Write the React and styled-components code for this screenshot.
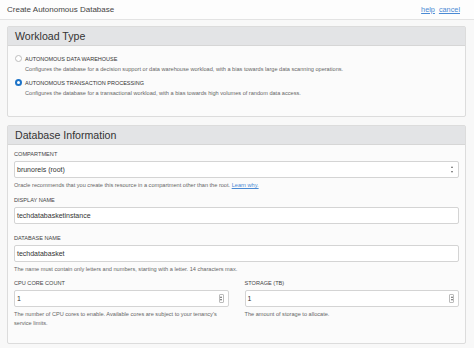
import React from "react"
import styled, { createGlobalStyle } from "styled-components"

const GlobalStyle = createGlobalStyle`
  body {
    margin: 0;
    background: #f8f8f8;
    font-family: "Liberation Sans", Arial, sans-serif;
    color: #333;
  }
`

const Page = styled.div`
  width: 474px;
  height: 348px;
  overflow: hidden;
`

const TopBar = styled.header`
  height: 20px;
  background: #fdfdfd;
  border-bottom: 1px solid #e3e3e3;
  display: flex;
  align-items: center;
  justify-content: space-between;
  padding: 0 14px 0 7px;
  box-sizing: border-box;
`

const Title = styled.h1`
  margin: 0;
  font-size: 8px;
  font-weight: 400;
  color: #444;
`

const Links = styled.div`
  display: flex;
  gap: 4px;
`

const TopLink = styled.a`
  font-size: 7.3px;
  color: #4a8ad4;
  text-decoration: underline;
`

const Body = styled.main`
  padding: 6px 8px 0 7px;
  display: flex;
  flex-direction: column;
  gap: 8px;
`

const Panel = styled.section`
  border: 1px solid #dcdcdc;
  border-radius: 2px;
  background: #fbfbfb;
  height: ${(p) => p.$height}px;
  box-sizing: border-box;
`

const PanelHeader = styled.h2`
  margin: 0;
  height: 18px;
  background: #e3e4e6;
  border-bottom: 1px solid #d6d6d6;
  font-size: 10.6px;
  font-weight: 400;
  color: #333;
  display: flex;
  align-items: center;
  padding-left: 7px;
`

const PanelBody = styled.div`
  padding: ${(p) => p.$pad};
`

const RadioRow = styled.label`
  display: grid;
  grid-template-columns: 7px 1fr;
  column-gap: 3px;
  align-items: center;
  margin-bottom: ${(p) => p.$gap}px;
`

const RadioDot = styled.span`
  width: 7px;
  height: 7px;
  box-sizing: border-box;
  border-radius: 50%;
  border: ${(p) => (p.$on ? "2px solid #1e74c8" : "1px solid #bdbdbd")};
  background: #fff;
`

const RadioLabel = styled.span`
  font-size: 5.5px;
  color: #333;
`

const RadioDesc = styled.span`
  grid-column: 2;
  font-size: 5.6px;
  color: #666;
  margin-top: 4px;
`

const Row = styled.div`
  display: grid;
  grid-template-columns: 1fr 1fr;
  column-gap: 16px;
`

const Field = styled.div`
  margin-bottom: ${(p) => p.$gap}px;
`

const FieldLabel = styled.div`
  font-size: 5.6px;
  color: #444;
  margin-bottom: 4px;
`

const InputBox = styled.div`
  height: 17px;
  box-sizing: border-box;
  border: 1px solid #d4d4d4;
  border-radius: 2px;
  background: #fff;
  display: flex;
  align-items: center;
  justify-content: space-between;
  padding: 0 4px 0 2px;
  font-size: 7px;
  color: #333;
`

const Help = styled.div`
  font-size: 5.6px;
  color: #666;
  margin-top: 3px;
  line-height: 9px;
`

const HelpLink = styled.a`
  color: #4a8ad4;
  text-decoration: underline;
`

const Spinner = styled.span`
  width: 5px;
  height: 9px;
  box-sizing: border-box;
  border: ${(p) => (p.$boxed ? "1px solid #bbb" : "none")};
  border-radius: 1px;
  display: flex;
  flex-direction: column;
  justify-content: space-around;
  align-items: center;
`

const Arrow = styled.span`
  width: 0;
  height: 0;
  border-left: 1.5px solid transparent;
  border-right: 1.5px solid transparent;
  ${(p) => (p.$up ? "border-bottom: 2px solid #666;" : "border-top: 2px solid #666;")}
`

const Stepper = ({ boxed }) => (
  <Spinner $boxed={boxed}>
    <Arrow $up />
    <Arrow />
  </Spinner>
)

export default function App() {
  return (
    <Page>
      <GlobalStyle />
      <TopBar>
        <Title>Create Autonomous Database</Title>
        <Links>
          <TopLink>help</TopLink>
          <TopLink>cancel</TopLink>
        </Links>
      </TopBar>
      <Body>
        <Panel $height={91}>
          <PanelHeader>Workload Type</PanelHeader>
          <PanelBody $pad="9px 7px 0 7px">
            <RadioRow $gap={7}>
              <RadioDot />
              <RadioLabel>AUTONOMOUS DATA WAREHOUSE</RadioLabel>
              <RadioDesc>
                Configures the database for a decision support or data warehouse workload, with a bias towards large data scanning operations.
              </RadioDesc>
            </RadioRow>
            <RadioRow $gap={0}>
              <RadioDot $on />
              <RadioLabel>AUTONOMOUS TRANSACTION PROCESSING</RadioLabel>
              <RadioDesc>
                Configures the database for a transactional workload, with a bias towards high volumes of random data access.
              </RadioDesc>
            </RadioRow>
          </PanelBody>
        </Panel>
        <Panel $height={219}>
          <PanelHeader>Database Information</PanelHeader>
          <PanelBody $pad="6px 6px 0 6px">
            <Field $gap={7}>
              <FieldLabel>COMPARTMENT</FieldLabel>
              <InputBox>
                brunoreis (root)
                <Stepper />
              </InputBox>
              <Help>
                Oracle recommends that you create this resource in a compartment other than the root.{" "}
                <HelpLink>Learn why.</HelpLink>
              </Help>
            </Field>
            <Field $gap={11}>
              <FieldLabel>DISPLAY NAME</FieldLabel>
              <InputBox>techdatabasketinstance</InputBox>
            </Field>
            <Field $gap={6}>
              <FieldLabel>DATABASE NAME</FieldLabel>
              <InputBox>techdatabasket</InputBox>
              <Help>The name must contain only letters and numbers, starting with a letter. 14 characters max.</Help>
            </Field>
            <Row>
              <Field $gap={0}>
                <FieldLabel>CPU CORE COUNT</FieldLabel>
                <InputBox>
                  1
                  <Stepper boxed />
                </InputBox>
                <Help>The number of CPU cores to enable. Available cores are subject to your tenancy's service limits.</Help>
              </Field>
              <Field $gap={0}>
                <FieldLabel>STORAGE (TB)</FieldLabel>
                <InputBox>
                  1
                  <Stepper boxed />
                </InputBox>
                <Help>The amount of storage to allocate.</Help>
              </Field>
            </Row>
          </PanelBody>
        </Panel>
      </Body>
    </Page>
  )
}
